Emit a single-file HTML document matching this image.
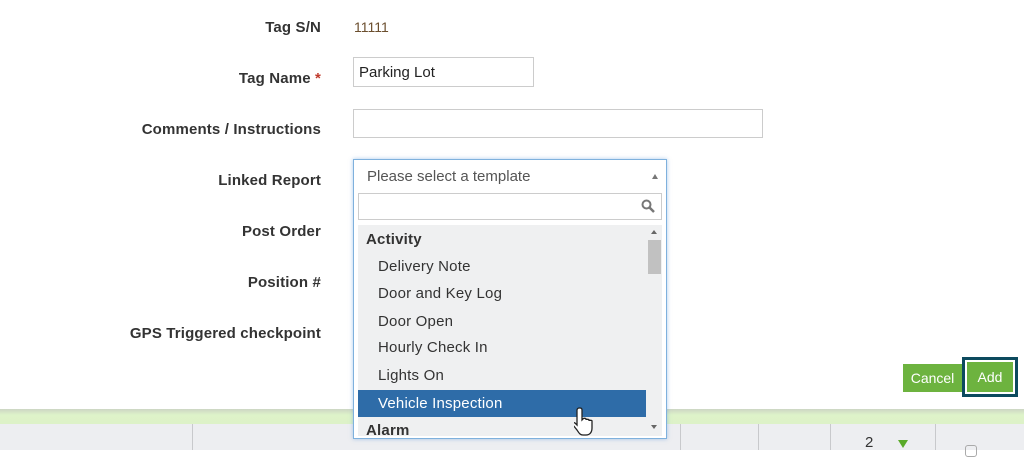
<!DOCTYPE html>
<html><head><style>
body{margin:0;width:1024px;height:450px;overflow:hidden;background:#fff;font-family:"Liberation Sans",sans-serif;font-size:15px;color:#333;position:relative}
.a{position:absolute}
.lbl{position:absolute;right:703px;font-weight:bold;color:#333;font-size:15px;letter-spacing:0.15px;white-space:nowrap}
.inp{position:absolute;border:1px solid #ccc;background:#fff;box-sizing:border-box}
.it{position:absolute;left:20px;color:#333;font-size:15px;letter-spacing:0.2px}
.vl{position:absolute;top:424px;height:26px;width:1px;background:#c8c9cc}
</style></head><body>
<div class="lbl" style="top:19px">Tag S/N</div>
<div class="a" style="left:354px;top:19px;color:#6b4e2e;font-size:14px">11111</div>
<div class="lbl" style="top:70px">Tag Name <span style="color:#c0392b">*</span></div>
<div class="inp" style="left:353px;top:57px;width:181px;height:30px"><span class="a" style="left:5px;top:6px;color:#222">Parking Lot</span></div>
<div class="lbl" style="top:121px">Comments / Instructions</div>
<div class="inp" style="left:353px;top:109px;width:410px;height:29px"></div>
<div class="lbl" style="top:172px">Linked Report</div>
<div class="lbl" style="top:223px">Post Order</div>
<div class="lbl" style="top:274px">Position #</div>
<div class="lbl" style="top:325px">GPS Triggered checkpoint</div>

<div class="a" style="left:0;top:409px;width:1024px;height:15px;background:linear-gradient(#cdd6c4,#def3c9 40%,#ddf2c8)"></div>
<div class="a" style="left:0;top:424px;width:1024px;height:26px;background:#edeef1"></div>
<div class="vl" style="left:192px"></div><div class="vl" style="left:680px"></div><div class="vl" style="left:758px"></div><div class="vl" style="left:830px"></div><div class="vl" style="left:935px"></div>
<div class="a" style="left:865px;top:434px;font-size:15px">2</div>
<div class="a" style="left:898px;top:440px;width:0;height:0;border-left:5px solid transparent;border-right:5px solid transparent;border-top:8px solid #5aaa2a"></div>
<div class="a" style="left:965px;top:445px;width:10px;height:10px;border:1px solid #aaa;border-radius:3px"></div>

<div class="a" style="left:903px;top:364px;width:59px;height:28px;background:#6db33f;color:#fff;text-align:center;line-height:29px;font-size:14px">Cancel</div>
<div class="a" style="left:962px;top:357px;width:56px;height:40px;background:#0c4a5e"></div>
<div class="a" style="left:965px;top:360px;width:50px;height:34px;background:#fff"></div>
<div class="a" style="left:967px;top:362px;width:46px;height:30px;background:#6db33f;color:#fff;text-align:center;line-height:31px;font-size:14px">Add</div>

<div class="a" style="left:353px;top:159px;width:312px;height:278px;border:1px solid #7fb1dd;background:#fff;box-shadow:0 0 4px rgba(90,150,220,.5)">
 <div class="a" style="left:13px;top:8px;color:#555">Please select a template</div>
 <div class="a" style="left:298px;top:14px;width:0;height:0;border-left:3px solid transparent;border-right:3px solid transparent;border-bottom:5px solid #777"></div>
 <div class="a" style="left:4px;top:33px;width:304px;height:27px;border:1px solid #ccc;box-sizing:border-box"></div>
 <svg class="a" style="left:287px;top:39px" width="14" height="14"><circle cx="5.5" cy="5.5" r="4" fill="none" stroke="#777" stroke-width="2"/><line x1="8.5" y1="8.5" x2="13" y2="13" stroke="#777" stroke-width="2.5"/></svg>
 <div class="a" style="left:4px;top:65px;width:304px;height:211px;background:#eff0f1;overflow:hidden">
  <div class="a" style="left:8px;top:6px;font-weight:bold;color:#333;letter-spacing:0.2px">Activity</div>
  <div class="it" style="top:33px">Delivery Note</div>
  <div class="it" style="top:60px">Door and Key Log</div>
  <div class="it" style="top:88px">Door Open</div>
  <div class="it" style="top:114px">Hourly Check In</div>
  <div class="it" style="top:142px">Lights On</div>
  <div class="a" style="left:0;top:165px;width:288px;height:27px;background:#2e6ca8"></div>
  <div class="it" style="top:170px;color:#fff">Vehicle Inspection</div>
  <div class="a" style="left:8px;top:197px;font-weight:bold;color:#333;letter-spacing:0.2px">Alarm</div>
  <div class="a" style="left:290px;top:15px;width:13px;height:34px;background:#c1c1c1"></div>
  <div class="a" style="left:293px;top:5px;width:0;height:0;border-left:3px solid transparent;border-right:3px solid transparent;border-bottom:4px solid #666"></div>
  <div class="a" style="left:293px;top:200px;width:0;height:0;border-left:3px solid transparent;border-right:3px solid transparent;border-top:4px solid #666"></div>
 </div>
</div>
<svg class="a" style="left:574px;top:406px" width="24" height="32" viewBox="0 0 24 32"><path d="M6 2c1.5 0 2 1 2 2v10l1-1c0-1 3-1 3 0v1c0-1 3-1 3 0v1c0-1 3-1 3 0v7c0 4-2 7-6 7h-3c-3 0-4-2-6-5l-4-5c-1-1 0-3 2-2l2 2V4c0-1 1-2 2-2z" fill="#fff" stroke="#222" stroke-width="1.3"/></svg>
</body></html>
